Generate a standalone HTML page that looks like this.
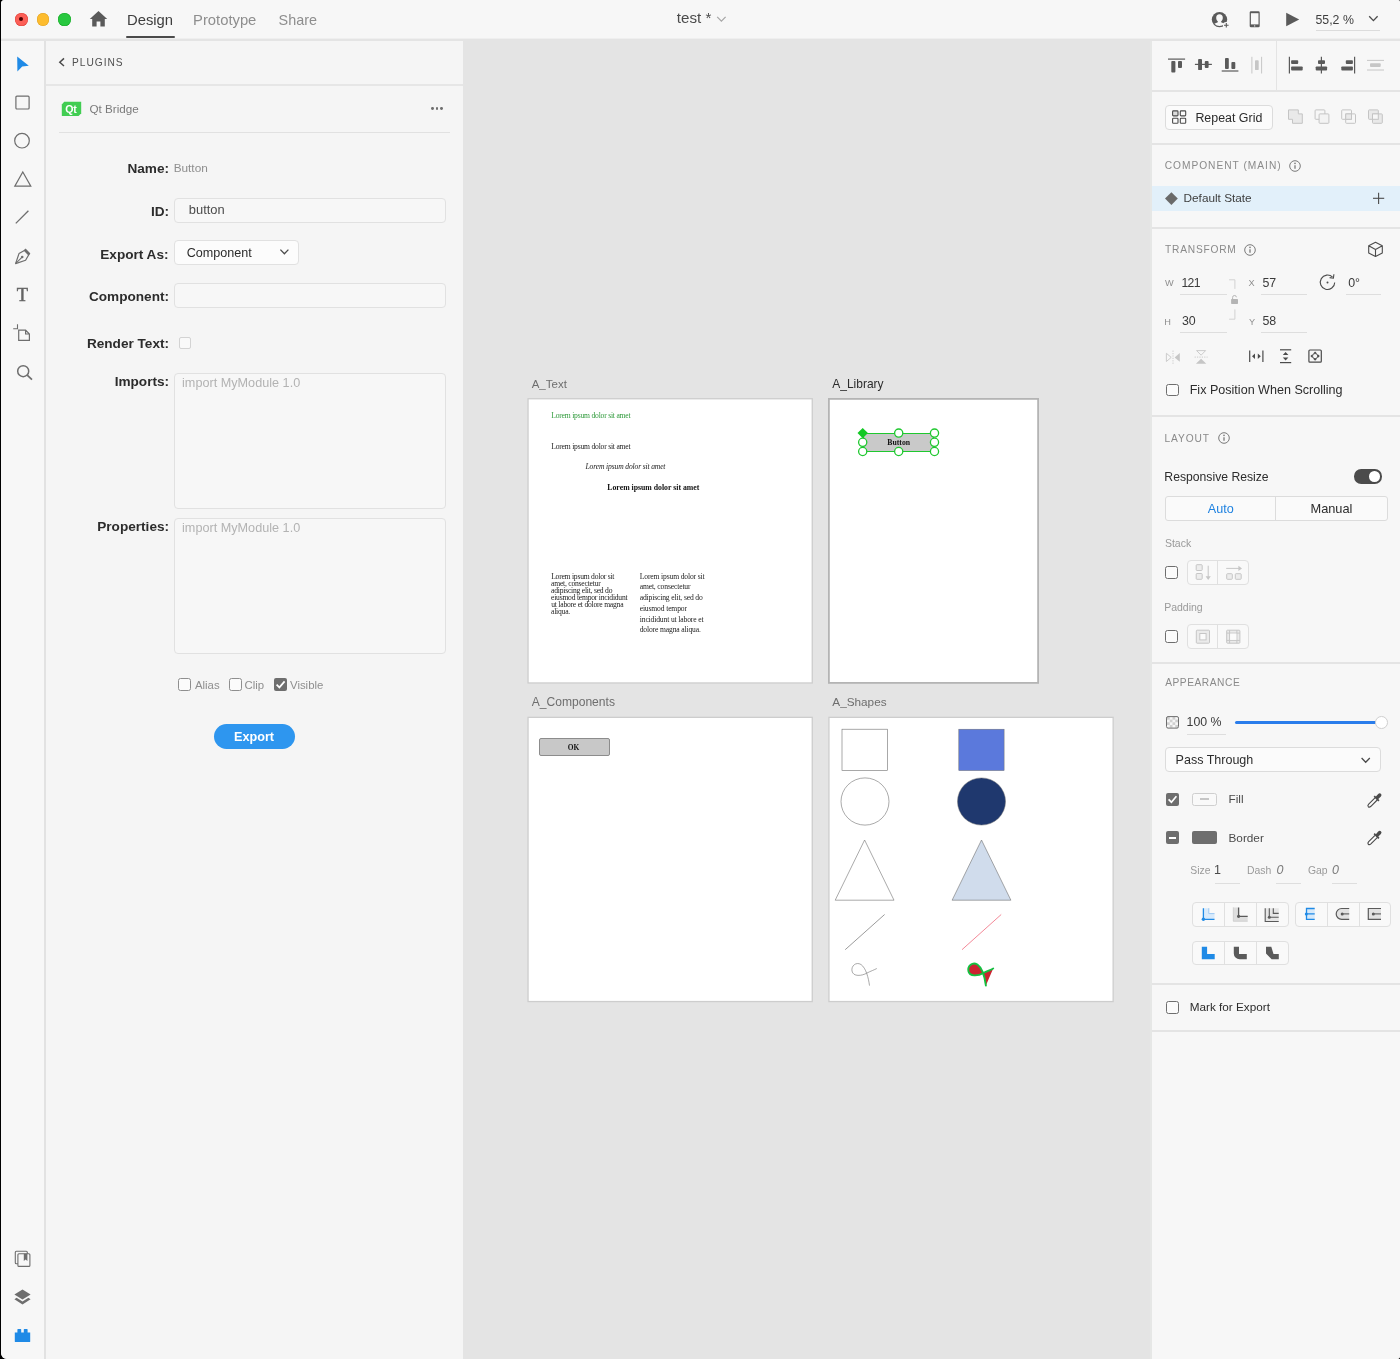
<!DOCTYPE html><html lang="en"><head><meta charset="utf-8"><title>Adobe XD - Qt Bridge</title><style>html,body{margin:0;padding:0;background:#000}
#app{position:relative;width:1400px;height:1359px;overflow:hidden;background:#000;font-family:"Liberation Sans",sans-serif}
#win{position:absolute;left:1px;top:0;width:1399px;height:1359px;overflow:hidden;border-radius:3.5px 2px 3px 6px;background:#e4e4e4}
#in{position:absolute;left:-1px;top:0;width:1400px;height:1359px;will-change:transform}
.b{position:absolute;box-sizing:content-box}
svg.b{overflow:visible}
.t{position:absolute;white-space:nowrap}
</style></head><body><div id="app"><div id="win"><div id="in"><div class="b" style="left:0px;top:0px;width:1400px;height:38px;background:#f7f7f7;border-bottom:1px solid #efefef"></div><div class="b" style="left:15.0px;top:12.8px;width:12.8px;height:12.8px;border-radius:50%;background:#fc5f57;box-shadow:inset 0 0 0 0.5px #e0443e"></div><div class="b" style="left:36.5px;top:12.8px;width:12.8px;height:12.8px;border-radius:50%;background:#fdbc2e;box-shadow:inset 0 0 0 0.5px #dea123"></div><div class="b" style="left:57.900000000000006px;top:12.8px;width:12.8px;height:12.8px;border-radius:50%;background:#28c840;box-shadow:inset 0 0 0 0.5px #1aab29"></div><div class="b" style="left:19.4px;top:17.2px;width:4px;height:4px;border-radius:50%;background:#4d0000"></div><svg class="b" style="left:89px;top:10px" width="19" height="18" viewBox="0 0 19 18" ><path d="M9.5 1 L0.8 9 H3.2 V16.6 H7.6 V11.4 H11.4 V16.6 H15.8 V9 H18.2 Z" fill="#5a5a5a"/></svg><div class="b" style="left:126px;top:36.4px;width:49px;height:2px;background:#4b4b4b;border-radius:1px"></div><svg class="b" style="left:716px;top:15px" width="11" height="8" viewBox="0 0 11 8" ><path d="M1.2 1.8 L5.4 6.2 L9.6 1.8" fill="none" stroke="#a6a6a6" stroke-width="1.2"/></svg><svg class="b" style="left:1210px;top:10px" width="22" height="20" viewBox="0 0 22 20" ><circle cx="9.5" cy="9.6" r="7.7" fill="#5a5a5a"/><path d="M9.5 4.2a3.3 3.6 0 0 1 3.3 3.6c0 1.6-.8 2.9-1.6 3.5v.9l3.4 1.5a7 7 0 0 1-10.2 0l3.4-1.5v-.9c-.8-.6-1.6-1.9-1.6-3.5a3.3 3.6 0 0 1 3.3-3.6z" fill="#f8f8f8"/><circle cx="16.3" cy="15.3" r="3.3" fill="#f8f8f8"/><path d="M14 15.3h4.6M16.3 13v4.6" stroke="#5a5a5a" stroke-width="1.1"/></svg><svg class="b" style="left:1249px;top:11px" width="12" height="17" viewBox="0 0 12 17" ><rect x="0.7" y="0.3" width="10" height="16" rx="1.3" fill="#5a5a5a"/><rect x="1.9" y="2.2" width="7.6" height="11.2" fill="#f8f8f8"/><circle cx="5.7" cy="14.9" r="0.6" fill="#f8f8f8"/></svg><svg class="b" style="left:1285px;top:12px" width="16" height="15" viewBox="0 0 16 15" ><path d="M1.2 0.8 L14.2 7.4 L1.2 14.2 Z" fill="#5a5a5a"/></svg><div class="b" style="left:1316px;top:30px;width:64px;height:1px;background:#dcdcdc"></div><svg class="b" style="left:1368px;top:15px" width="11" height="8" viewBox="0 0 11 8" ><path d="M1.2 1.2 L5.4 5.6 L9.6 1.2" fill="none" stroke="#4b4b4b" stroke-width="1.3"/></svg><div class="b" style="left:0px;top:41px;width:44px;height:1318px;background:#f7f7f7;border-right:2px solid #e2e2e2"></div><svg class="b" style="left:15px;top:55px" width="16" height="18" viewBox="0 0 16 18" ><path d="M2.2 1.4 L13.8 10.8 L7.2 11.6 L2.4 16.6 Z" fill="#1f8ae6"/></svg><svg class="b" style="left:14px;top:94px" width="17" height="17" viewBox="0 0 17 17" ><rect x="1.9" y="2.2" width="13.2" height="12.8" rx="1" fill="none" stroke="#6e6e6e" stroke-width="1.2"/></svg><svg class="b" style="left:13px;top:132px" width="18" height="18" viewBox="0 0 18 18" ><circle cx="9" cy="8.7" r="7.3" fill="none" stroke="#6e6e6e" stroke-width="1.2"/></svg><svg class="b" style="left:13px;top:170px" width="20" height="18" viewBox="0 0 20 18" ><path d="M9.8 2 L17.8 16.2 H1.8 Z" fill="none" stroke="#6e6e6e" stroke-width="1.2" stroke-linejoin="miter"/></svg><svg class="b" style="left:14px;top:209px" width="16" height="16" viewBox="0 0 16 16" ><path d="M1.8 14.4 L14.4 1.7" stroke="#6e6e6e" stroke-width="1.3"/></svg><svg class="b" style="left:13px;top:247px" width="19" height="19" viewBox="0 0 19 19" ><path d="M12.3 3 L16.2 7 L12.6 13.2 L2.6 16.6 L6 6.6 Z" fill="none" stroke="#6e6e6e" stroke-width="1.2" stroke-linejoin="round"/><path d="M12.6 1.6 L17.4 6.4 L15.4 8.4 L10.6 3.6 Z" fill="#6e6e6e"/><path d="M2.8 16.4 L8.6 10.6" stroke="#6e6e6e" stroke-width="1.1"/><circle cx="9.2" cy="10" r="1.3" fill="#6e6e6e"/></svg><svg class="b" style="left:12px;top:323px" width="20" height="20" viewBox="0 0 20 20" ><path d="M6.7 7.2 H13.6 L17.4 11 V17.4 H6.7 Z M13.6 7.2 V11 H17.4" fill="none" stroke="#6e6e6e" stroke-width="1.2"/><path d="M1.2 5.7 H6 M5.5 1.2 V6.2" stroke="#6e6e6e" stroke-width="1.1"/></svg><svg class="b" style="left:14px;top:362px" width="20" height="20" viewBox="0 0 20 20" ><circle cx="9.2" cy="9.2" r="5.5" fill="none" stroke="#6e6e6e" stroke-width="1.5"/><path d="M13.2 13.2 L18 17.6" stroke="#6e6e6e" stroke-width="1.7"/></svg><svg class="b" style="left:13px;top:1248.5px" width="19" height="19" viewBox="0 0 19 19" ><rect x="2.3" y="2.2" width="12" height="12.6" rx="1" fill="none" stroke="#6e6e6e" stroke-width="1.1"/><rect x="4.9" y="4.8" width="12" height="12.6" rx="1" fill="#f7f7f7" stroke="#6e6e6e" stroke-width="1.1"/><path d="M10.8 4.8 H14.4 V12 L12.6 10.4 L10.8 12 Z" fill="#6e6e6e"/></svg><svg class="b" style="left:13px;top:1288px" width="19" height="18" viewBox="0 0 19 18" ><path d="M9.5 1.4 L17.6 6.4 L9.5 11.6 L1.4 6.4 Z" fill="#6e6e6e"/><path d="M3.6 9.8 L1.4 11.2 L9.5 16.6 L17.6 11.2 L15.4 9.8 L9.5 13.6 Z" fill="#6e6e6e"/></svg><svg class="b" style="left:13px;top:1327px" width="19" height="17" viewBox="0 0 19 17" ><path d="M1.8 5.6 H4.4 V2.6 Q4.4 2 5 2 H7.6 Q8.2 2 8.2 2.6 V5.6 H10.8 V2.6 Q10.8 2 11.4 2 H14 Q14.6 2 14.6 2.6 V5.6 H17.2 V14.4 Q17.2 15 16.6 15 H2.4 Q1.8 15 1.8 14.4 Z" fill="#1f8ae6"/></svg>
<div class="b" style="left:46px;top:41px;width:417px;height:1318px;background:#f5f5f5"></div><svg class="b" style="left:57px;top:56px" width="10" height="12" viewBox="0 0 10 12" ><path d="M7 2.4 L2.8 6.2 L7 10" fill="none" stroke="#4b4b4b" stroke-width="1.5"/></svg><div class="b" style="left:46px;top:84px;width:417px;height:2px;background:#e6e6e6"></div><svg class="b" style="left:61px;top:101px" width="21" height="16" viewBox="0 0 21 16" ><path d="M3.2 0.8 H20.2 V12.2 L17.6 15 H0.8 V3.4 Z" fill="#41cd52"/></svg><div class="b" style="left:430.90000000000003px;top:107.4px;width:2.8px;height:2.8px;border-radius:50%;background:#6e6e6e"></div><div class="b" style="left:435.5px;top:107.4px;width:2.8px;height:2.8px;border-radius:50%;background:#6e6e6e"></div><div class="b" style="left:440.1px;top:107.4px;width:2.8px;height:2.8px;border-radius:50%;background:#6e6e6e"></div><div class="b" style="left:59px;top:132px;width:391px;height:1px;background:#e1e1e1"></div><div class="b" style="left:174px;top:198px;width:272px;height:25px;border:1px solid #e1e1e1;border-radius:4px;background:#f7f7f7;box-sizing:border-box"></div><div class="b" style="left:174px;top:240px;width:125px;height:25px;border:1px solid #e1e1e1;border-radius:4px;background:#fcfcfc;box-sizing:border-box"></div><svg class="b" style="left:279px;top:248px" width="11" height="9" viewBox="0 0 11 9" ><path d="M1.4 1.6 L5.4 5.8 L9.4 1.6" fill="none" stroke="#4b4b4b" stroke-width="1.3"/></svg><div class="b" style="left:174px;top:283px;width:272px;height:25px;border:1px solid #e1e1e1;border-radius:4px;background:#f7f7f7;box-sizing:border-box"></div><div class="b" style="left:178.8px;top:337px;width:12.4px;height:12.4px;border:1px solid #d3d3d3;border-radius:2px;background:#f9f9f9;box-sizing:border-box"></div><div class="b" style="left:174px;top:373px;width:272px;height:136px;border:1px solid #e1e1e1;border-radius:4px;background:#f7f7f7;box-sizing:border-box"></div><div class="b" style="left:174px;top:518px;width:272px;height:136.4px;border:1px solid #e1e1e1;border-radius:4px;background:#f7f7f7;box-sizing:border-box"></div><div class="b" style="left:178.2px;top:678.3px;width:13px;height:12.8px;border:1px solid #8e8e8e;border-radius:2.5px;background:#fbfbfb;box-sizing:border-box"></div><div class="b" style="left:228.6px;top:678.3px;width:13px;height:12.8px;border:1px solid #8e8e8e;border-radius:2.5px;background:#fbfbfb;box-sizing:border-box"></div><div class="b" style="left:273.5px;top:678.3px;width:13px;height:12.8px;border-radius:2px;background:#6e6e6e"></div><svg class="b" style="left:273.5px;top:678.3px" width="13" height="13" viewBox="0 0 13 13" ><path d="M2.6 6.6 L5.4 9.4 L10.6 3.4" fill="none" stroke="#fff" stroke-width="1.7"/></svg><div class="b" style="left:213.7px;top:723.8px;width:81.3px;height:25.6px;border-radius:13px;background:#2e96ef"></div>
<svg class="b" style="left:0px;top:0px" width="1400" height="1359" viewBox="0 0 1400 1359" ><rect x="528.05" y="398.75" width="284.20" height="284.20" fill="#fff" stroke="#cdcdcd" stroke-width="1.3"/><rect x="828.90" y="398.90" width="209.20" height="284.00" fill="#fff" stroke="#b4b4b4" stroke-width="1.8"/><rect x="528.05" y="717.35" width="284.20" height="284.20" fill="#fff" stroke="#cdcdcd" stroke-width="1.3"/><rect x="828.95" y="717.35" width="284.20" height="284.20" fill="#fff" stroke="#cdcdcd" stroke-width="1.3"/></svg><div class="b" style="left:862.7px;top:433px;width:71.8px;height:18.5px;background:#c9c9c9;box-sizing:border-box;border:1px solid #1fc82f"></div><svg class="b" style="left:0px;top:0px" width="1400" height="1359" viewBox="0 0 1400 1359" ><path d="M857.5 433.1 L862.7 427.90000000000003 L867.9000000000001 433.1 L862.7 438.3 Z" fill="#12c824"/><circle cx="862.7" cy="442.3" r="4.1" fill="#fff" stroke="#1fc82f" stroke-width="1.3"/><circle cx="862.7" cy="451.5" r="4.1" fill="#fff" stroke="#1fc82f" stroke-width="1.3"/><circle cx="898.7" cy="433.1" r="4.1" fill="#fff" stroke="#1fc82f" stroke-width="1.3"/><circle cx="898.7" cy="451.5" r="4.1" fill="#fff" stroke="#1fc82f" stroke-width="1.3"/><circle cx="934.5" cy="433.1" r="4.1" fill="#fff" stroke="#1fc82f" stroke-width="1.3"/><circle cx="934.5" cy="442.3" r="4.1" fill="#fff" stroke="#1fc82f" stroke-width="1.3"/><circle cx="934.5" cy="451.5" r="4.1" fill="#fff" stroke="#1fc82f" stroke-width="1.3"/></svg><div class="b" style="left:539.3px;top:738.4px;width:70.4px;height:17.3px;background:#c8c8c8;box-sizing:border-box;border:1px solid #8c8c8c;border-radius:2px"></div><svg class="b" style="left:0px;top:0px" width="1400" height="1359" viewBox="0 0 1400 1359" ><rect x="842" y="729.2" width="45.4" height="41.4" fill="#fff" stroke="#707070" stroke-width="0.6"/><rect x="958.8" y="729.2" width="45.3" height="41.4" fill="#5b79dc" stroke="#707070" stroke-width="0.5"/><ellipse cx="865" cy="801.5" rx="24" ry="23.6" fill="#fff" stroke="#707070" stroke-width="0.6"/><ellipse cx="981.5" cy="801.5" rx="24" ry="23.6" fill="#1f386e" stroke="#707070" stroke-width="0.5"/><path d="M864.6 840 L894 900.2 H835.2 Z" fill="#fff" stroke="#707070" stroke-width="0.6"/><path d="M981.5 840 L1010.9 900.2 H952.1 Z" fill="#d0dcec" stroke="#707070" stroke-width="0.6"/><path d="M845.2 949.7 L884.6 914.5" stroke="#707070" stroke-width="0.7"/><path d="M962 949.7 L1001.2 914.5" stroke="#f06a7c" stroke-width="0.8"/><path d="M869.5 985.6 C868.5 978 866 968 861 964.5 C856 961.5 851 966 852 971 C853 977 862 976 867 973 C871 971 874 970 876.8 968.5" fill="none" stroke="#707070" stroke-width="0.6"/><path d="M985.9 985.6 C984.9 978 982.4 968 977.4 964.5 C972.4 961.5 967.4 966 968.4 971 C969.4 977 978.4 976 983.4 973 C987.4 971 990.4 970 993.2 968.5" fill="#cc2230" stroke="#14c040" stroke-width="1.9" stroke-linecap="round"/></svg>
<div class="b" style="left:1150px;top:41px;width:250px;height:1318px;background:#f7f7f7;border-left:2px solid #e6e7e6;box-sizing:border-box"></div><div class="b" style="left:1152px;top:90px;width:248px;height:2px;background:#e4e4e4"></div><div class="b" style="left:1152px;top:143px;width:248px;height:2px;background:#e4e4e4"></div><div class="b" style="left:1152px;top:227px;width:248px;height:2px;background:#e4e4e4"></div><div class="b" style="left:1152px;top:415px;width:248px;height:2px;background:#e4e4e4"></div><div class="b" style="left:1152px;top:662px;width:248px;height:2px;background:#e4e4e4"></div><div class="b" style="left:1152px;top:983px;width:248px;height:2px;background:#e4e4e4"></div><div class="b" style="left:1152px;top:1030px;width:248px;height:2px;background:#e4e4e4"></div><div class="b" style="left:1276px;top:41px;width:1px;height:49px;background:#e4e4e4"></div><div class="b" style="left:1165.3px;top:105.2px;width:107.6px;height:24.8px;border:1px solid #dcdcdc;border-radius:4px;background:#fbfbfb;box-sizing:border-box"></div><svg class="b" style="left:1288.2px;top:158.5px" width="14" height="14" viewBox="0 0 14 14" ><circle cx="7" cy="7" r="5.3" fill="none" stroke="#7a7a7a" stroke-width="1"/><path d="M7 6.2 V9.8" stroke="#7a7a7a" stroke-width="1.3"/><circle cx="7" cy="4.4" r="0.8" fill="#7a7a7a"/></svg><div class="b" style="left:1152px;top:186px;width:248px;height:25px;background:#e2f0fa"></div><svg class="b" style="left:1242.5px;top:243px" width="14" height="14" viewBox="0 0 14 14" ><circle cx="7" cy="7" r="5.3" fill="none" stroke="#7a7a7a" stroke-width="1"/><path d="M7 6.2 V9.8" stroke="#7a7a7a" stroke-width="1.3"/><circle cx="7" cy="4.4" r="0.8" fill="#7a7a7a"/></svg><div class="b" style="left:1180px;top:293.8px;width:46.9px;height:1px;background:#dedede"></div><div class="b" style="left:1260.6px;top:293.8px;width:46.8px;height:1px;background:#dedede"></div><div class="b" style="left:1346.4px;top:293.8px;width:34.8px;height:1px;background:#dedede"></div><div class="b" style="left:1180px;top:332.2px;width:46.9px;height:1px;background:#dedede"></div><div class="b" style="left:1260.6px;top:332.2px;width:46.8px;height:1px;background:#dedede"></div><div class="b" style="left:1166px;top:383.5px;width:12.9px;height:12.7px;border:1.2px solid #6e6e6e;border-radius:2.5px;background:#fbfbfb;box-sizing:border-box"></div><svg class="b" style="left:1216.6px;top:431px" width="14" height="14" viewBox="0 0 14 14" ><circle cx="7" cy="7" r="5.3" fill="none" stroke="#7a7a7a" stroke-width="1"/><path d="M7 6.2 V9.8" stroke="#7a7a7a" stroke-width="1.3"/><circle cx="7" cy="4.4" r="0.8" fill="#7a7a7a"/></svg><div class="b" style="left:1353.9px;top:469.4px;width:28px;height:14.4px;border-radius:7.2px;background:#4b4b4b"></div><div class="b" style="left:1369.4px;top:471.3px;width:10.6px;height:10.6px;border-radius:50%;background:#fff"></div><div class="b" style="left:1165.3px;top:496px;width:222.6px;height:25px;border:1px solid #dcdcdc;border-radius:3px;background:#fafafa;box-sizing:border-box"></div><div class="b" style="left:1275.3px;top:497px;width:1px;height:23px;background:#dcdcdc"></div><div class="b" style="left:1165.1px;top:566.1px;width:12.9px;height:12.7px;border:1.2px solid #6e6e6e;border-radius:2.5px;background:#fbfbfb;box-sizing:border-box"></div><div class="b" style="left:1187.2px;top:560.1px;width:61.8px;height:25px;border:1px solid #e0e0e0;border-radius:4px;background:#f9f9f9;box-sizing:border-box"></div><div class="b" style="left:1217px;top:560.6px;width:1px;height:24px;background:#e0e0e0"></div><div class="b" style="left:1165.1px;top:630.1px;width:12.9px;height:12.7px;border:1.2px solid #6e6e6e;border-radius:2.5px;background:#fbfbfb;box-sizing:border-box"></div><div class="b" style="left:1187.2px;top:624.1px;width:61.8px;height:25px;border:1px solid #e0e0e0;border-radius:4px;background:#f9f9f9;box-sizing:border-box"></div><div class="b" style="left:1217px;top:624.6px;width:1px;height:24px;background:#e0e0e0"></div><svg class="b" style="left:0px;top:0px" width="1400" height="700" viewBox="0 0 1400 700" ><path d="M1168 59.1 L1185.1 59.1" stroke="#5a5a5a" stroke-width="1.2" fill="none"/><rect x="1171.3" y="61" width="4.1" height="11.4" rx="0.9" fill="#5a5a5a"/><rect x="1178" y="61" width="4" height="6.9" rx="0.9" fill="#5a5a5a"/><path d="M1194.9 64.4 L1211.9 64.4" stroke="#5a5a5a" stroke-width="1.2" fill="none"/><rect x="1198.1" y="59" width="3.9" height="11.1" rx="0.9" fill="#5a5a5a"/><rect x="1204.8" y="61.1" width="3.8" height="6.8" rx="0.9" fill="#5a5a5a"/><path d="M1221.7 71 L1238.4 71" stroke="#5a5a5a" stroke-width="1.2" fill="none"/><rect x="1225" y="58" width="3.8" height="11" rx="0.9" fill="#5a5a5a"/><rect x="1231.4" y="62.1" width="3.9" height="6.9" rx="0.9" fill="#5a5a5a"/><path d="M1251.9 56.8 L1251.9 73.5" stroke="#c6c6c6" stroke-width="1" fill="none"/><path d="M1261.6 56.8 L1261.6 73.5" stroke="#c6c6c6" stroke-width="1" fill="none"/><rect x="1255" y="60.2" width="3.7" height="9.9" rx="0.9" fill="#c6c6c6"/><path d="M1289.4 56.8 L1289.4 73.5" stroke="#5a5a5a" stroke-width="1.2" fill="none"/><rect x="1291.1" y="60.2" width="7.1" height="3.7" rx="0.9" fill="#5a5a5a"/><rect x="1291.1" y="66.4" width="11.6" height="4.1" rx="0.9" fill="#5a5a5a"/><path d="M1321.4 56.8 L1321.4 73.5" stroke="#5a5a5a" stroke-width="1.2" fill="none"/><rect x="1318" y="60.2" width="7" height="3.7" rx="0.9" fill="#5a5a5a"/><rect x="1315.7" y="66.4" width="11.4" height="4.1" rx="0.9" fill="#5a5a5a"/><path d="M1354.6 56.8 L1354.6 73.5" stroke="#5a5a5a" stroke-width="1.2" fill="none"/><rect x="1345.8" y="60.2" width="7.1" height="3.7" rx="0.9" fill="#5a5a5a"/><rect x="1341.3" y="66.4" width="11.6" height="4.1" rx="0.9" fill="#5a5a5a"/><path d="M1367 60.4 L1384 60.4" stroke="#c6c6c6" stroke-width="1" fill="none"/><path d="M1367 70 L1384 70" stroke="#c6c6c6" stroke-width="1" fill="none"/><rect x="1370" y="63.3" width="10.7" height="3.7" rx="0.9" fill="#c6c6c6"/><rect x="1172.6" y="110.9" width="5.4" height="5" rx="0.8" fill="#dcdcdc" stroke="#4b4b4b" stroke-width="1.1"/><rect x="1180.3" y="110.9" width="5.4" height="5" rx="0.8" fill="none" stroke="#4b4b4b" stroke-width="1.1"/><rect x="1172.6" y="118.3" width="5.4" height="5" rx="0.8" fill="none" stroke="#4b4b4b" stroke-width="1.1"/><rect x="1180.3" y="118.3" width="5.4" height="5" rx="0.8" fill="none" stroke="#4b4b4b" stroke-width="1.1"/><path d="M1288.5 109.9 H1298.3 V113.9 H1302.3 V123.3 H1292.5 V119.3 H1288.5 Z" fill="#e9e9e9" stroke="#c4c4c4" stroke-width="1"/><rect x="1315.1" y="109.9" width="9.8" height="9.4" rx="0.8" fill="none" stroke="#c4c4c4"/><rect x="1319.1" y="113.9" width="9.8" height="9.4" rx="0.8" fill="#f3f3f3" stroke="#c4c4c4"/><rect x="1341.7" y="109.9" width="9.8" height="9.4" rx="0.8" fill="none" stroke="#c4c4c4"/><rect x="1345.7" y="113.9" width="9.8" height="9.4" rx="0.8" fill="none" stroke="#c4c4c4"/><rect x="1345.7" y="113.9" width="5.8" height="5.4" fill="#e9e9e9" stroke="#c4c4c4"/><rect x="1368.5" y="109.9" width="9.8" height="9.4" rx="0.8" fill="#e9e9e9" stroke="#c4c4c4"/><rect x="1372.5" y="113.9" width="9.8" height="9.4" rx="0.8" fill="#e9e9e9" stroke="#c4c4c4"/><rect x="1372.5" y="113.9" width="5.8" height="5.4" fill="#f7f7f7" stroke="#c4c4c4"/><path d="M1171.4 192.2 L1177.8 198.6 L1171.4 205 L1165 198.6 Z" fill="#6a6a6a"/><path d="M1373 198.3 L1384.2 198.3" stroke="#4b4b4b" stroke-width="1.1" fill="none"/><path d="M1378.6 192.7 L1378.6 203.9" stroke="#4b4b4b" stroke-width="1.1" fill="none"/><path d="M1375.5 242.3 L1382.3 245.8 V253 L1375.5 256.5 L1368.7 253 V245.8 Z M1368.7 245.8 L1375.5 249.4 L1382.3 245.8 M1375.5 249.4 V256.5" fill="none" stroke="#4b4b4b" stroke-width="1.1" stroke-linejoin="round"/><path d="M1229.1 279.8 H1234.9 V288.9 M1234.9 309.4 V319.2 H1229.1" fill="none" stroke="#d2d2d2" stroke-width="1"/><rect x="1231.1" y="299.1" width="6.9" height="4.9" rx="0.7" fill="#b4b4b4"/><path d="M1232.6 299.1 V297.6 A1.9 1.9 0 0 1 1236.4 297.2" fill="none" stroke="#b4b4b4" stroke-width="1"/><path d="M1332.6 277.2 A7.2 7.2 0 1 0 1334.7 282.4" fill="none" stroke="#4b4b4b" stroke-width="1.1"/><path d="M1329.6 277.6 L1333.4 278.2 L1333.9 274.3" fill="none" stroke="#4b4b4b" stroke-width="1.1"/><circle cx="1327.5" cy="282.4" r="1" fill="#4b4b4b"/><path d="M1166.4 353.3 L1171.2 357.4 L1166.4 361.5 Z" fill="none" stroke="#c6c6c6" stroke-width="0.9"/><path d="M1179.8 353 L1174.6 357.4 L1179.8 361.8 Z" fill="#c6c6c6"/><path d="M1173 350.6 V364" stroke="#c6c6c6" stroke-width="0.9" stroke-dasharray="1.2 1.2"/><path d="M1196.6 350.6 L1201.1 355.2 L1205.6 350.6 Z" fill="none" stroke="#c6c6c6" stroke-width="0.9"/><path d="M1195.9 363.8 L1201.1 358.8 L1206.3 363.8 Z" fill="#c6c6c6"/><path d="M1194.6 357.1 H1207.6" stroke="#c6c6c6" stroke-width="0.9" stroke-dasharray="1.2 1.2"/><path d="M1249.7 350.6 L1249.7 362" stroke="#4b4b4b" stroke-width="1.2" fill="none"/><path d="M1262.9 350.6 L1262.9 362" stroke="#4b4b4b" stroke-width="1.2" fill="none"/><path d="M1252 356.3 L1255 353.6 V359 Z M1260.8 356.3 L1257.8 353.6 V359 Z" fill="#4b4b4b"/><path d="M1280 349.8 L1291.2 349.8" stroke="#4b4b4b" stroke-width="1.2" fill="none"/><path d="M1280 362.6 L1291.2 362.6" stroke="#4b4b4b" stroke-width="1.2" fill="none"/><path d="M1285.6 352.1 L1288.4 355.1 H1282.8 Z M1285.6 360.6 L1288.4 357.6 H1282.8 Z" fill="#4b4b4b"/><rect x="1308.9" y="350" width="12.4" height="12.2" rx="1" fill="none" stroke="#4b4b4b" stroke-width="1.2"/><circle cx="1315.1" cy="356.1" r="2.6" fill="none" stroke="#4b4b4b" stroke-width="0.9"/><path d="M1315.1 351.4 L1317 353.4 H1313.2 Z M1315.1 360.8 L1317 358.8 H1313.2 Z M1310.4 356.1 L1312.4 354.2 V358 Z M1319.8 356.1 L1317.8 354.2 V358 Z" fill="#4b4b4b"/><rect x="1196.2" y="564.7" width="6" height="5.8" rx="0.8" fill="#ededed" stroke="#c6c6c6" stroke-width="1"/><rect x="1196.2" y="573.5" width="6" height="5.8" rx="0.8" fill="#ededed" stroke="#c6c6c6" stroke-width="1"/><path d="M1208.2 565.7 V578.6" stroke="#c6c6c6" stroke-width="1"/><path d="M1205.6 576.2 H1210.8 L1208.2 579.9 Z" fill="#c6c6c6"/><path d="M1226.2 568.4 H1240.4" stroke="#c6c6c6" stroke-width="1"/><path d="M1238.4 565.8 V571 L1242 568.4 Z" fill="#c6c6c6"/><rect x="1226.7" y="573.7" width="5.6" height="5.6" rx="0.8" fill="#ededed" stroke="#c6c6c6" stroke-width="1"/><rect x="1235.3" y="573.7" width="5.9" height="5.6" rx="0.8" fill="#ededed" stroke="#c6c6c6" stroke-width="1"/><rect x="1196.3" y="630.2" width="13.2" height="13" rx="0.8" fill="#ebebeb" stroke="#c6c6c6"/><rect x="1199.8" y="633.5" width="6.3" height="6.4" fill="#fbfbfb" stroke="#c6c6c6"/><rect x="1226.7" y="630.2" width="13.2" height="13" rx="0.8" fill="#ebebeb" stroke="#c6c6c6"/><path d="M1229.6 630.2 V643.2 M1236.9 630.2 V643.2 M1226.7 633.1 H1239.9 M1226.7 640.4 H1239.9" stroke="#c6c6c6" fill="none"/><rect x="1230.1" y="633.6" width="6.3" height="6.3" fill="#fbfbfb"/></svg>
<div class="b" style="left:1187.4px;top:734px;width:38.6px;height:1px;background:#dedede"></div><div class="b" style="left:1235.4px;top:721px;width:142px;height:3px;background:#2a7deb;border-radius:1.5px"></div><div class="b" style="left:1374.8px;top:716.1px;width:12.8px;height:12.8px;border-radius:50%;background:#fff;border:1px solid #cfcfcf;box-sizing:border-box"></div><div class="b" style="left:1165.1px;top:747.3px;width:215.5px;height:24.7px;border:1px solid #dcdcdc;border-radius:4px;background:#fbfbfb;box-sizing:border-box"></div><div class="b" style="left:1166px;top:793px;width:12.9px;height:12.6px;border-radius:2px;background:#6e6e6e"></div><div class="b" style="left:1191.7px;top:793px;width:25.4px;height:12.6px;border:1px solid #cfcfcf;border-radius:2.5px;background:#f9f9f9;box-sizing:border-box"></div><div class="b" style="left:1199.8px;top:798.3px;width:9.4px;height:1.6px;background:#c6c6c6"></div><div class="b" style="left:1166px;top:831.4px;width:12.9px;height:12.6px;border-radius:2px;background:#6e6e6e"></div><div class="b" style="left:1168.6px;top:836.8px;width:7.7px;height:1.8px;background:#fff"></div><div class="b" style="left:1191.7px;top:831.4px;width:25.4px;height:12.6px;border-radius:2px;background:#6e6e6e"></div><div class="b" style="left:1214.8px;top:882.6px;width:25.0px;height:1px;background:#dedede"></div><div class="b" style="left:1276.2px;top:882.6px;width:25.2px;height:1px;background:#dedede"></div><div class="b" style="left:1331.8px;top:882.6px;width:25.2px;height:1px;background:#dedede"></div><div class="b" style="left:1192px;top:902.1px;width:96.5px;height:24.8px;border:1px solid #e0e0e0;border-radius:4px;background:#f9f9f9;box-sizing:border-box"></div><div class="b" style="left:1224.2px;top:902.6px;width:1px;height:23.8px;background:#e0e0e0"></div><div class="b" style="left:1256.3px;top:902.6px;width:1px;height:23.8px;background:#e0e0e0"></div><div class="b" style="left:1294.5px;top:902.1px;width:96.5px;height:24.8px;border:1px solid #e0e0e0;border-radius:4px;background:#f9f9f9;box-sizing:border-box"></div><div class="b" style="left:1326.7px;top:902.6px;width:1px;height:23.8px;background:#e0e0e0"></div><div class="b" style="left:1358.8px;top:902.6px;width:1px;height:23.8px;background:#e0e0e0"></div><div class="b" style="left:1192px;top:940.5px;width:96.5px;height:24.8px;border:1px solid #e0e0e0;border-radius:4px;background:#f9f9f9;box-sizing:border-box"></div><div class="b" style="left:1224.2px;top:941.0px;width:1px;height:23.8px;background:#e0e0e0"></div><div class="b" style="left:1256.3px;top:941.0px;width:1px;height:23.8px;background:#e0e0e0"></div><div class="b" style="left:1166px;top:1001.3px;width:12.9px;height:12.7px;border:1.2px solid #6e6e6e;border-radius:2.5px;background:#fbfbfb;box-sizing:border-box"></div><svg class="b" style="left:0px;top:660px" width="1400" height="699" viewBox="0 660 1400 699" ><rect x="1167.00" y="717.00" width="2.75" height="2.65" fill="#cfcfcf"/><rect x="1167.00" y="722.30" width="2.75" height="2.65" fill="#cfcfcf"/><rect x="1169.75" y="719.65" width="2.75" height="2.65" fill="#cfcfcf"/><rect x="1169.75" y="724.95" width="2.75" height="2.65" fill="#cfcfcf"/><rect x="1172.50" y="717.00" width="2.75" height="2.65" fill="#cfcfcf"/><rect x="1172.50" y="722.30" width="2.75" height="2.65" fill="#cfcfcf"/><rect x="1175.25" y="719.65" width="2.75" height="2.65" fill="#cfcfcf"/><rect x="1175.25" y="724.95" width="2.75" height="2.65" fill="#cfcfcf"/><rect x="1166.5" y="716.6" width="12" height="11.5" rx="1.5" fill="none" stroke="#6e6e6e" stroke-width="1"/><path d="M1361.6 758 L1365.7 762.2 L1369.8 758" fill="none" stroke="#4b4b4b" stroke-width="1.3"/><path d="M1168.6 799.4 L1171.4 802.2 L1176.4 796.2" fill="none" stroke="#fff" stroke-width="1.7"/><g transform="translate(1367 792.8)"><path d="M8 5 L1.7 11.3 Q0.3 12.9 1.3 13.9 Q2.4 14.8 3.9 13.5 L10.2 7.2" fill="#fbfbfb" stroke="#4b4b4b" stroke-width="1.15" stroke-linejoin="round"/><path d="M6.6 3.9 L11.3 8.6 L12.5 7.4 L11.3 6.2 L13.9 3.6 Q15.2 2 13.9 0.9 Q12.6 -0.2 11.2 1.1 L8.9 3.8 L7.8 2.7 Z" fill="#4b4b4b"/></g><g transform="translate(1367 830.4)"><path d="M8 5 L1.7 11.3 Q0.3 12.9 1.3 13.9 Q2.4 14.8 3.9 13.5 L10.2 7.2" fill="#fbfbfb" stroke="#4b4b4b" stroke-width="1.15" stroke-linejoin="round"/><path d="M6.6 3.9 L11.3 8.6 L12.5 7.4 L11.3 6.2 L13.9 3.6 Q15.2 2 13.9 0.9 Q12.6 -0.2 11.2 1.1 L8.9 3.8 L7.8 2.7 Z" fill="#4b4b4b"/></g><path d="M1203.4 908.2 H1208.8 V913.6 H1214.5 V919.3 H1203.4 Z" fill="#d8eafb"/><path d="M1208.8 908.2 V913.6 H1214.5" fill="none" stroke="#9cc8f3" stroke-width="1"/><path d="M1203.4 908.2 V919.3 H1214.5" fill="none" stroke="#1f8ae6" stroke-width="1.3"/><circle cx="1203.4" cy="919.3" r="1.7" fill="#1f8ae6"/><path d="M1233.1 907.4 H1238.6 V916.3 H1247.7 V921.4 H1233.1 Z" fill="#dedede"/><path d="M1233.3 907.4 V921.2 H1247.7" fill="none" stroke="#cdcdcd" stroke-width="0.8"/><path d="M1238.6 907.4 V916.3 H1247.7" fill="none" stroke="#5a5a5a" stroke-width="1.3"/><circle cx="1238.6" cy="916.3" r="1.6" fill="#5a5a5a"/><rect x="1265.2" y="908.2" width="13.5" height="13.3" fill="#e6e6e6"/><path d="M1265.2 908.2 V921.5 H1278.7 M1269.3 908.2 V917.3 H1278.7 M1273.3 908.2 V913.4 H1278.7" fill="none" stroke="#5a5a5a" stroke-width="1.1"/><circle cx="1269.3" cy="917.3" r="1.5" fill="#5a5a5a"/><rect x="1306.5" y="908.5" width="8.2" height="10.8" fill="#d6e9fa"/><path d="M1314.7 908.5 H1306.5 V919.3 H1314.7 M1306.5 913.9 H1314.7" fill="none" stroke="#1f8ae6" stroke-width="1.3"/><circle cx="1306.3" cy="913.9" r="1.5" fill="#1f8ae6"/><path d="M1349.2 908.5 H1341.6 A5.4 5.4 0 0 0 1341.6 919.3 H1349.2" fill="#e2e2e2" stroke="#5a5a5a" stroke-width="1.2"/><path d="M1342.2 913.9 H1349.2" stroke="#5a5a5a" stroke-width="1.1"/><circle cx="1342.2" cy="913.9" r="1.5" fill="#5a5a5a"/><path d="M1381 908.5 H1368.3 V919.3 H1381" fill="#e2e2e2" stroke="#5a5a5a" stroke-width="1.2"/><path d="M1373.3 913.9 H1381" stroke="#5a5a5a" stroke-width="1.1"/><circle cx="1373.3" cy="913.9" r="1.5" fill="#5a5a5a"/><path d="M1201.8 946.7 H1207.1 V953.9 H1214.7 V959.2 H1201.8 Z" fill="#1f8ae6"/><path d="M1233.8 946.7 H1239 V953.9 H1246.8 V959.2 H1239.6 A5.8 5.8 0 0 1 1233.8 953.4 Z" fill="#5a5a5a"/><path d="M1266 946.7 H1271.3 L1273.5 953.9 H1278.8 V959.2 H1271.6 L1266 953.4 Z" fill="#5a5a5a"/></svg>
<span class="t" style='left:127.02px;top:12px;font-size:14.80px;line-height:16px;color:#3e3e3e'>Design</span><span class="t" style='left:193.02px;top:12px;font-size:14.80px;line-height:16px;color:#8e8e8e'>Prototype</span><span class="t" style='left:278.62px;top:12px;font-size:14.40px;line-height:16px;color:#8e8e8e'>Share</span><span class="t" style='left:676.85px;top:9px;font-size:15.14px;line-height:17px;color:#4b4b4b'>test *</span><span class="t" style='left:1315.51px;top:13px;font-size:12.32px;line-height:14px;color:#3e3e3e'>55,2 %</span><span class="t" style='left:16.72px;top:285px;font-size:18.40px;line-height:20px;color:#646464;font-family:"Liberation Serif", serif;-webkit-text-stroke:0.5px #646464'>T</span><span class="t" style='left:71.98px;top:57px;font-size:10.20px;line-height:11px;color:#505050;letter-spacing:0.99px'>PLUGINS</span><span class="t" style='left:65.18px;top:103px;font-size:10.60px;line-height:12px;color:#fff;font-weight:700;letter-spacing:-0.12px'>Qt</span><span class="t" style='left:89.53px;top:102px;font-size:11.67px;line-height:13px;color:#7a7a7a'>Qt Bridge</span><span class="t" style='left:127.49px;top:161px;font-size:13.60px;line-height:15px;color:#2c2c2c;font-weight:700'>Name:</span><span class="t" style='left:150.94px;top:204px;font-size:13.60px;line-height:15px;color:#2c2c2c;font-weight:700'>ID:</span><span class="t" style='left:100.30px;top:247px;font-size:13.60px;line-height:15px;color:#2c2c2c;font-weight:700'>Export As:</span><span class="t" style='left:88.99px;top:289px;font-size:13.60px;line-height:15px;color:#2c2c2c;font-weight:700'>Component:</span><span class="t" style='left:86.95px;top:336px;font-size:13.60px;line-height:15px;color:#2c2c2c;font-weight:700'>Render Text:</span><span class="t" style='left:114.66px;top:374px;font-size:13.60px;line-height:15px;color:#2c2c2c;font-weight:700'>Imports:</span><span class="t" style='left:97.27px;top:519px;font-size:13.60px;line-height:15px;color:#2c2c2c;font-weight:700'>Properties:</span><span class="t" style='left:173.66px;top:161px;font-size:11.80px;line-height:14px;color:#8e8e8e'>Button</span><span class="t" style='left:188.83px;top:202px;font-size:12.90px;line-height:15px;color:#4b4b4b'>button</span><span class="t" style='left:186.77px;top:246px;font-size:12.59px;line-height:14px;color:#2c2c2c'>Component</span><span class="t" style='left:182.04px;top:376px;font-size:12.66px;line-height:14px;color:#b3b3b3'>import MyModule 1.0</span><span class="t" style='left:182.04px;top:521px;font-size:12.66px;line-height:14px;color:#b3b3b3'>import MyModule 1.0</span><span class="t" style='left:194.90px;top:679px;font-size:11.40px;line-height:12px;color:#8e8e8e'>Alias</span><span class="t" style='left:244.43px;top:679px;font-size:11.40px;line-height:12px;color:#8e8e8e'>Clip</span><span class="t" style='left:290.00px;top:679px;font-size:11.40px;line-height:12px;color:#8e8e8e'>Visible</span><span class="t" style='left:233.94px;top:730px;font-size:12.66px;line-height:14px;color:#fff;font-weight:700'>Export</span><span class="t" style='left:531.70px;top:378px;font-size:11.51px;line-height:12px;color:#6e6e6e'>A_Text</span><span class="t" style='left:832.30px;top:377px;font-size:11.99px;line-height:14px;color:#2c2c2c'>A_Library</span><span class="t" style='left:531.70px;top:695px;font-size:12.09px;line-height:14px;color:#6e6e6e'>A_Components</span><span class="t" style='left:832.30px;top:695px;font-size:11.78px;line-height:13px;color:#6e6e6e'>A_Shapes</span><span class="t" style='left:551.25px;top:411px;font-size:7.60px;line-height:9px;color:#2e9a3a;letter-spacing:-0.20px;font-family:"Liberation Serif", serif'>Lorem ipsum dolor sit amet</span><span class="t" style='left:551.25px;top:442px;font-size:7.60px;line-height:9px;color:#222;letter-spacing:-0.20px;font-family:"Liberation Serif", serif'>Lorem ipsum dolor sit amet</span><span class="t" style='left:585.55px;top:462px;font-size:7.60px;line-height:9px;color:#222;font-style:italic;letter-spacing:-0.15px;font-family:"Liberation Serif", serif'>Lorem ipsum dolor sit amet</span><span class="t" style='left:607.32px;top:483px;font-size:7.78px;line-height:9px;color:#111;font-weight:700;font-family:"Liberation Serif", serif'>Lorem ipsum dolor sit amet</span><span class="t" style='left:551.15px;top:572px;font-size:7.60px;line-height:9px;color:#222;letter-spacing:-0.22px;font-family:"Liberation Serif", serif'>Lorem ipsum dolor sit</span><span class="t" style='left:551.07px;top:579px;font-size:7.60px;line-height:9px;color:#222;letter-spacing:-0.22px;font-family:"Liberation Serif", serif'>amet, consectetur</span><span class="t" style='left:551.07px;top:586px;font-size:7.60px;line-height:9px;color:#222;letter-spacing:-0.22px;font-family:"Liberation Serif", serif'>adipiscing elit, sed do</span><span class="t" style='left:551.07px;top:593px;font-size:7.60px;line-height:9px;color:#222;letter-spacing:-0.22px;font-family:"Liberation Serif", serif'>eiusmod tempor incididunt</span><span class="t" style='left:551.22px;top:600px;font-size:7.60px;line-height:9px;color:#222;letter-spacing:-0.22px;font-family:"Liberation Serif", serif'>ut labore et dolore magna</span><span class="t" style='left:551.07px;top:607px;font-size:7.60px;line-height:9px;color:#222;letter-spacing:-0.22px;font-family:"Liberation Serif", serif'>aliqua.</span><span class="t" style='left:639.75px;top:572px;font-size:7.60px;line-height:9px;color:#222;letter-spacing:-0.14px;font-family:"Liberation Serif", serif'>Lorem ipsum dolor sit</span><span class="t" style='left:639.67px;top:582px;font-size:7.60px;line-height:9px;color:#222;letter-spacing:-0.14px;font-family:"Liberation Serif", serif'>amet, consectetur</span><span class="t" style='left:639.67px;top:593px;font-size:7.60px;line-height:9px;color:#222;letter-spacing:-0.14px;font-family:"Liberation Serif", serif'>adipiscing elit, sed do</span><span class="t" style='left:639.67px;top:604px;font-size:7.60px;line-height:9px;color:#222;letter-spacing:-0.14px;font-family:"Liberation Serif", serif'>eiusmod tempor</span><span class="t" style='left:639.75px;top:615px;font-size:7.60px;line-height:9px;color:#222;letter-spacing:-0.14px;font-family:"Liberation Serif", serif'>incididunt ut labore et</span><span class="t" style='left:639.67px;top:625px;font-size:7.60px;line-height:9px;color:#222;letter-spacing:-0.14px;font-family:"Liberation Serif", serif'>dolore magna aliqua.</span><span class="t" style='left:887.32px;top:438px;font-size:7.72px;line-height:9px;color:#111;font-weight:700;font-family:"Liberation Serif", serif'>Button</span><span class="t" style='left:567.83px;top:743px;font-size:7.40px;line-height:9px;color:#111;font-weight:700;font-family:"Liberation Serif", serif'>OK</span><span class="t" style='left:1195.41px;top:111px;font-size:12.41px;line-height:14px;color:#2c2c2c'>Repeat Grid</span><span class="t" style='left:1164.69px;top:160px;font-size:10.20px;line-height:11px;color:#8a8a8a;letter-spacing:0.99px'>COMPONENT (MAIN)</span><span class="t" style='left:1183.56px;top:191px;font-size:11.79px;line-height:13px;color:#3e3e3e'>Default State</span><span class="t" style='left:1165.00px;top:244px;font-size:10.20px;line-height:11px;color:#8a8a8a;letter-spacing:0.79px'>TRANSFORM</span><span class="t" style='left:1165.10px;top:278px;font-size:9.20px;line-height:10px;color:#8e8e8e'>W</span><span class="t" style='left:1181.45px;top:276px;font-size:12.20px;line-height:14px;color:#3a3a3a;letter-spacing:-0.67px'>121</span><span class="t" style='left:1248.62px;top:278px;font-size:9.20px;line-height:10px;color:#8e8e8e'>X</span><span class="t" style='left:1262.40px;top:276px;font-size:12.40px;line-height:14px;color:#3a3a3a'>57</span><span class="t" style='left:1348.23px;top:276px;font-size:12.40px;line-height:14px;color:#3a3a3a'>0°</span><span class="t" style='left:1164.36px;top:317px;font-size:9.20px;line-height:10px;color:#8e8e8e'>H</span><span class="t" style='left:1181.93px;top:314px;font-size:12.40px;line-height:14px;color:#3a3a3a'>30</span><span class="t" style='left:1248.92px;top:317px;font-size:9.20px;line-height:10px;color:#8e8e8e'>Y</span><span class="t" style='left:1262.40px;top:314px;font-size:12.40px;line-height:14px;color:#3a3a3a'>58</span><span class="t" style='left:1189.69px;top:383px;font-size:12.57px;line-height:14px;color:#2c2c2c'>Fix Position When Scrolling</span><span class="t" style='left:1164.38px;top:433px;font-size:10.20px;line-height:11px;color:#8a8a8a;letter-spacing:0.92px'>LAYOUT</span><span class="t" style='left:1164.33px;top:470px;font-size:12.19px;line-height:14px;color:#2c2c2c'>Responsive Resize</span><span class="t" style='left:1207.85px;top:502px;font-size:12.62px;line-height:14px;color:#1f82e0'>Auto</span><span class="t" style='left:1310.48px;top:501px;font-size:12.81px;line-height:15px;color:#2c2c2c'>Manual</span><span class="t" style='left:1164.88px;top:537px;font-size:10.50px;line-height:12px;color:#9a9a9a'>Stack</span><span class="t" style='left:1164.16px;top:601px;font-size:10.50px;line-height:12px;color:#9a9a9a'>Padding</span><span class="t" style='left:1165.20px;top:677px;font-size:10.20px;line-height:11px;color:#8a8a8a;letter-spacing:0.54px'>APPEARANCE</span><span class="t" style='left:1186.54px;top:715px;font-size:12.35px;line-height:14px;color:#3a3a3a'>100 %</span><span class="t" style='left:1175.60px;top:753px;font-size:12.53px;line-height:14px;color:#2c2c2c'>Pass Through</span><span class="t" style='left:1228.46px;top:792px;font-size:11.80px;line-height:14px;color:#4b4b4b'>Fill</span><span class="t" style='left:1228.46px;top:831px;font-size:11.80px;line-height:14px;color:#4b4b4b'>Border</span><span class="t" style='left:1190.28px;top:865px;font-size:10.40px;line-height:11px;color:#9a9a9a'>Size</span><span class="t" style='left:1213.92px;top:863px;font-size:12.50px;line-height:14px;color:#4b4b4b'>1</span><span class="t" style='left:1247.07px;top:865px;font-size:10.40px;line-height:11px;color:#9a9a9a'>Dash</span><span class="t" style='left:1276.50px;top:863px;font-size:12.50px;line-height:14px;color:#7a7a7a;font-style:italic'>0</span><span class="t" style='left:1307.88px;top:865px;font-size:10.40px;line-height:11px;color:#9a9a9a'>Gap</span><span class="t" style='left:1332.00px;top:863px;font-size:12.50px;line-height:14px;color:#7a7a7a;font-style:italic'>0</span><span class="t" style='left:1189.76px;top:1000px;font-size:11.74px;line-height:13px;color:#2c2c2c'>Mark for Export</span></div></div></div></body></html>
